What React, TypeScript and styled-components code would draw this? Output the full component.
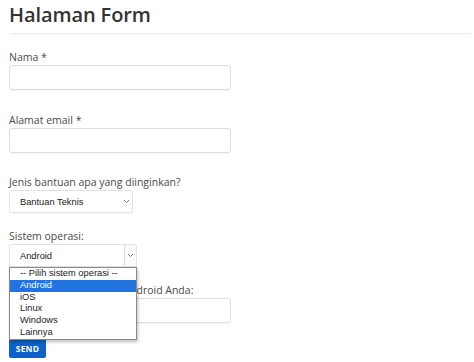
import styled, { createGlobalStyle } from 'styled-components';

const GlobalStyle = createGlobalStyle`
  body {
    margin: 0;
    background: #fff;
    font-family: 'Open Sans', 'Noto Sans', sans-serif;
  }
`;

const Page = styled.div({
  display: 'flex',
  flexDirection: 'column',
  padding: '0 2px 0 9px'
});

const Title = styled.h1({
  margin: 0,
  fontSize: '20px',
  lineHeight: '30px',
  fontWeight: 600,
  color: '#333',
  letterSpacing: '-0.1px'
});

const Rule = styled.div({
  height: '1px',
  background: '#ececec',
  boxShadow: '0 1px 2px rgba(0,0,0,0.04)',
  margin: '3px 0 16px 1px'
});

const Group = styled.div<{ $gap: number }>(props => ({
  display: 'flex',
  flexDirection: 'column',
  marginBottom: `${props.$gap}px`
}));

const Label = styled.label({
  fontSize: '10.5px',
  lineHeight: '15px',
  color: '#4a4a4a',
  whiteSpace: 'nowrap'
});

const TextInput = styled.div({
  width: '222px',
  height: '25px',
  boxSizing: 'border-box',
  border: '1px solid #dedede',
  borderRadius: '3px',
  boxShadow: '0 1px 1px rgba(0,0,0,0.04)',
  background: '#fff'
});

const SelectBox = styled.div<{ $width: number; $open?: boolean }>(props => ({
  position: 'relative',
  width: `${props.$width}px`,
  height: '23px',
  boxSizing: 'border-box',
  border: '1px solid #e2e2e2',
  borderRadius: props.$open ? '3px 3px 0 0' : '3px',
  boxShadow: '0 1px 1px rgba(0,0,0,0.04)',
  display: 'flex',
  alignItems: 'center',
  justifyContent: 'space-between',
  fontFamily: "'Liberation Sans', Arial, sans-serif",
  fontSize: '9.3px',
  color: '#222',
  paddingLeft: '10px'
}));

const Arrow = styled.span<{ $boxed?: boolean }>(props => ({
  alignSelf: 'stretch',
  width: '10px',
  display: 'flex',
  alignItems: 'center',
  justifyContent: 'center',
  marginRight: '1px',
  borderLeft: props.$boxed ? '1px solid #dcdcdc' : 'none',
  background: props.$boxed ? '#fafafa' : 'transparent'
}));

const List = styled.ul({
  position: 'absolute',
  top: '22px',
  left: '-1px',
  width: '128px',
  margin: 0,
  padding: 0,
  listStyle: 'none',
  background: '#fff',
  border: '1px solid #8a8a8a',
  boxShadow: '1px 2px 3px rgba(0,0,0,0.25)',
  zIndex: 2,
  boxSizing: 'border-box'
});

const Option = styled.li<{ $active?: boolean }>(props => ({
  height: '11.8px',
  lineHeight: '11.8px',
  fontFamily: "'Liberation Sans', Arial, sans-serif",
  fontSize: '9.3px',
  padding: '0 0 0 10px',
  color: props.$active ? '#fff' : '#222',
  background: props.$active ? '#2173e0' : 'transparent',
  whiteSpace: 'nowrap'
}));

const SendButton = styled.button({
  alignSelf: 'flex-start',
  width: '37px',
  height: '19px',
  padding: 0,
  border: 'none',
  borderRadius: '2px',
  background: '#0c62c8',
  color: '#fff',
  fontFamily: "'Open Sans', sans-serif",
  fontWeight: 700,
  fontSize: '8.5px',
  letterSpacing: '0.2px'
});

function Chevron() {
  return (
    <svg width='7' height='5' viewBox='0 0 7 5'>
      <path d='M1 1 L3.5 3.5 L6 1' fill='none' stroke='#777' strokeWidth='1' />
    </svg>
  );
}

const systems = ['-- Pilih sistem operasi --', 'Android', 'iOS', 'Linux', 'Windows', 'Lainnya'];

export default function App() {
  return (
    <Page>
      <GlobalStyle />
      <Title>Halaman Form</Title>
      <Rule />
      <Group $gap={23}>
        <Label>Nama *</Label>
        <TextInput />
      </Group>
      <Group $gap={22}>
        <Label>Alamat email *</Label>
        <TextInput />
      </Group>
      <Group $gap={16}>
        <Label>Jenis bantuan apa yang diinginkan?</Label>
        <SelectBox $width={124}>
          Bantuan Teknis
          <Arrow>
            <Chevron />
          </Arrow>
        </SelectBox>
      </Group>
      <Group $gap={16}>
        <Label>Sistem operasi:</Label>
        <SelectBox $width={128} $open>
          Android
          <Arrow $boxed>
            <Chevron />
          </Arrow>
          <List>
            {systems.map(s => (
              <Option key={s} $active={s === 'Android'}>
                {s}
              </Option>
            ))}
          </List>
        </SelectBox>
      </Group>
      <Group $gap={16}>
        <Label>Masukkan nomor versi Android Anda:</Label>
        <TextInput />
      </Group>
      <SendButton>SEND</SendButton>
    </Page>
  );
}
